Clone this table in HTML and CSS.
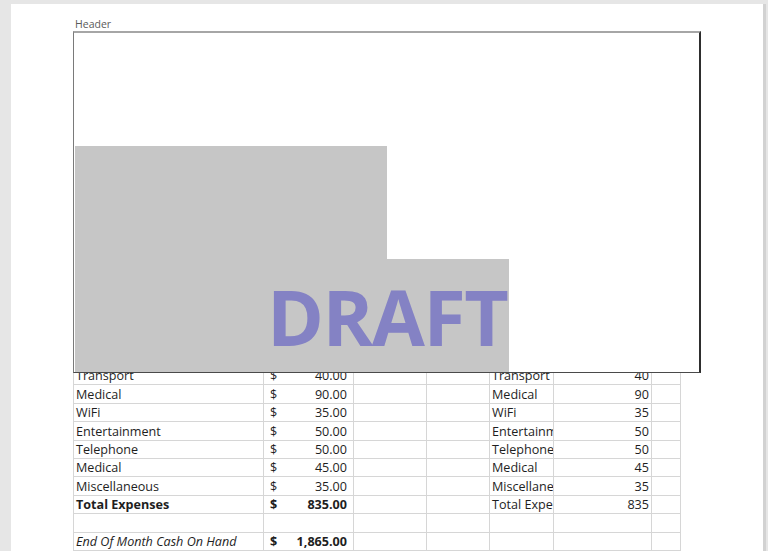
FILE: index.html
```html
<!DOCTYPE html>
<html>
<head>
<meta charset="utf-8">
<link rel="stylesheet" href="styles.css">
</head>
<body>
<div class="page">
  <div class="header-label">Header</div>
  <div class="header-box">
    <div class="shade shade-a"></div>
    <div class="shade shade-b"></div>
    <div class="draft">DRAFT</div>
  </div>
  <table class="sheet">
    <colgroup>
      <col class="c1"><col class="c2"><col class="c3"><col class="c4"><col class="c5"><col class="c6"><col class="c7">
    </colgroup>
    <tbody>
      <tr><td>Transport</td><td><span class="acc"><span>$</span><span>40.00</span></span></td><td></td><td></td><td>Transport</td><td class="num">40</td><td></td></tr>
      <tr><td>Medical</td><td><span class="acc"><span>$</span><span>90.00</span></span></td><td></td><td></td><td>Medical</td><td class="num">90</td><td></td></tr>
      <tr><td>WiFi</td><td><span class="acc"><span>$</span><span>35.00</span></span></td><td></td><td></td><td>WiFi</td><td class="num">35</td><td></td></tr>
      <tr><td>Entertainment</td><td><span class="acc"><span>$</span><span>50.00</span></span></td><td></td><td></td><td>Entertainment</td><td class="num">50</td><td></td></tr>
      <tr><td>Telephone</td><td><span class="acc"><span>$</span><span>50.00</span></span></td><td></td><td></td><td>Telephone</td><td class="num">50</td><td></td></tr>
      <tr><td>Medical</td><td><span class="acc"><span>$</span><span>45.00</span></span></td><td></td><td></td><td>Medical</td><td class="num">45</td><td></td></tr>
      <tr><td>Miscellaneous</td><td><span class="acc"><span>$</span><span>35.00</span></span></td><td></td><td></td><td>Miscellaneous</td><td class="num">35</td><td></td></tr>
      <tr class="bold"><td>Total Expenses</td><td><span class="acc"><span>$</span><span>835.00</span></span></td><td></td><td></td><td class="normal">Total Expenses</td><td class="num normal">835</td><td></td></tr>
      <tr><td></td><td></td><td></td><td></td><td></td><td></td><td></td></tr>
      <tr><td class="italic">End Of Month Cash On Hand</td><td class="strong"><span class="acc"><span>$</span><span>1,865.00</span></span></td><td></td><td></td><td></td><td></td><td></td></tr>
    </tbody>
  </table>
</div>
</body>
</html>
```

FILE: styles.css
```css
html, body {
  margin: 0;
  padding: 0;
  background: #e6e6e6;
  overflow: hidden;
}

.page {
  position: relative;
  margin: 4px 0 0 11px;
  width: 752px;
  height: 547px;
  background: #ffffff;
  box-shadow: 3px 0 0 #d2d2d2;
  padding: 14px 0 0 62px;
  box-sizing: border-box;
  font-family: "Open Sans", "Liberation Sans", sans-serif;
  overflow: hidden;
}

.header-label {
  font-size: 10.5px;
  line-height: 13px;
  color: #5a5a5a;
  padding-left: 2px;
}

.header-box {
  position: absolute;
  left: 62px;
  top: 27px;
  width: 628px;
  height: 342px;
  box-sizing: border-box;
  border-top: 2px solid #a6a6a6;
  border-left: 1px solid #7a7a7a;
  border-right: 2px solid #2e2e2e;
  border-bottom: 1px solid #4a4a4a;
  background: #ffffff;
  z-index: 2;
  overflow: hidden;
}

.shade {
  position: absolute;
  background: #c6c6c6;
  bottom: 0;
}

.shade-a {
  left: 1px;
  width: 312px;
  top: 113px;
}

.shade-b {
  left: 313px;
  width: 122px;
  top: 226px;
}

.draft {
  position: absolute;
  left: 193px;
  top: 234px;
  font-family: "Open Sans", sans-serif;
  font-weight: 700;
  font-size: 77px;
  line-height: 100px;
  letter-spacing: -1.5px;
  color: #8482c4;
}

.sheet {
  margin-top: 335px;
  border-collapse: collapse;
  table-layout: fixed;
  width: 607px;
  font-size: 12.6px;
  color: #1e1e1e;
}

.sheet col.c1 { width: 190px; }
.sheet col.c2 { width: 90px; }
.sheet col.c3 { width: 73px; }
.sheet col.c4 { width: 63px; }
.sheet col.c5 { width: 64px; }
.sheet col.c6 { width: 98px; }
.sheet col.c7 { width: 29px; }

.sheet td {
  height: 17.4px;
  padding: 0 2px;
  border: 1px solid #d6d6d6;
  white-space: nowrap;
  overflow: hidden;
  text-overflow: clip;
  line-height: 16px;
  vertical-align: bottom;
}

.sheet td.num {
  text-align: right;
}

.acc {
  display: flex;
  justify-content: space-between;
  padding: 0 4px 0 4px;
}

.bold td { font-weight: 700; }
.bold td.normal { font-weight: 400; }
.italic { font-style: italic; }
.strong { font-weight: 700; }
```
